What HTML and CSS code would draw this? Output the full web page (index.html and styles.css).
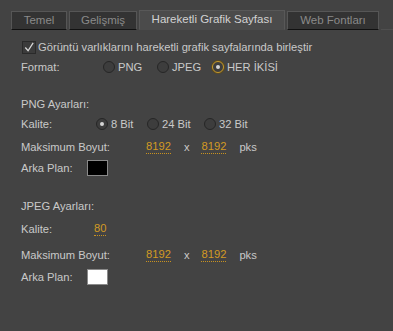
FILE: index.html
```html
<!DOCTYPE html>
<html lang="tr">
<head>
<meta charset="utf-8">
<link rel="stylesheet" href="styles.css">
</head>
<body>
<div class="tabs">
  <div class="tab tab-temel">Temel</div>
  <div class="tab tab-gel">Gelişmiş</div>
  <div class="tab active tab-har">Hareketli Grafik Sayfası</div>
  <div class="tab tab-web">Web Fontları</div>
  <div class="tab-rest"></div>
</div>
<div class="panel">
  <div class="row row-check">
    <span class="checkbox"><svg width="13" height="13" viewBox="0 0 13 13"><path d="M2.5 6.5 L5.5 10 L11 1.5" fill="none" stroke="#d8d8d8" stroke-width="1.4"/></svg></span>
    <span class="label">Görüntü varlıklarını hareketli grafik sayfalarında birleştir</span>
  </div>
  <div class="row row-format">
    <span class="label lw-format">Format:</span>
    <span class="radio"></span><span class="rtext w-png">PNG</span>
    <span class="radio"></span><span class="rtext w-jpeg">JPEG</span>
    <span class="radio on focus"></span><span class="rtext">HER İKİSİ</span>
  </div>

  <div class="row row-head1"><span class="label">PNG Ayarları:</span></div>
  <div class="row row-kal1">
    <span class="label lw-kal1">Kalite:</span>
    <span class="radio on"></span><span class="rtext w-8">8 Bit</span>
    <span class="radio"></span><span class="rtext w-24">24 Bit</span>
    <span class="radio"></span><span class="rtext">32 Bit</span>
  </div>
  <div class="row row-max1">
    <span class="label lw-max">Maksimum Boyut:</span>
    <span class="val w-val">8192</span><span class="label w-x">x</span>
    <span class="val w-val2">8192</span><span class="label">pks</span>
  </div>
  <div class="row row-bg1">
    <span class="label lw-bg">Arka Plan:</span>
    <span class="swatch black"></span>
  </div>

  <div class="row row-head2"><span class="label">JPEG Ayarları:</span></div>
  <div class="row row-kal2">
    <span class="label lw-kal2">Kalite:</span>
    <span class="val">80</span>
  </div>
  <div class="row row-max2">
    <span class="label lw-max">Maksimum Boyut:</span>
    <span class="val w-val">8192</span><span class="label w-x">x</span>
    <span class="val w-val2">8192</span><span class="label">pks</span>
  </div>
  <div class="row row-bg2">
    <span class="label lw-bg">Arka Plan:</span>
    <span class="swatch white"></span>
  </div>
</div>
</body>
</html>
```
FILE: styles.css
```css
html, body {
  margin: 0;
  padding: 0;
  background: #434343;
  width: 393px;
  height: 331px;
  overflow: hidden;
  font-family: "Liberation Sans", Arial, sans-serif;
  font-size: 11.2px;
  color: #c9c9c9;
}

.tabs {
  display: flex;
  align-items: flex-end;
  margin-top: 10px;
  padding-left: 11px;
  height: 20px;
}
.tab {
  box-sizing: border-box;
  height: 19px;
  line-height: 17px;
  background: #333333;
  border: 1px solid #565656;
  border-bottom: 1px solid #111;
  color: #8a8a8a;
  text-align: center;
  margin-right: 2px;
  font-size: 11.5px;
}
.tab.active {
  height: 20px;
  background: #4b4b4b;
  border-color: #585858;
  border-bottom: 1px solid #4b4b4b;
  color: #d2d2d2;
}
.tab-temel { width: 56px; }
.tab-gel { width: 68px; }
.tab-har { width: 146px; }
.tab-web { width: 92px; }
.tab-rest {
  flex: 1;
  height: 1px;
  background: #4f4f4f;
}

.panel {
  display: flex;
  flex-direction: column;
  padding-left: 21px;
}
.row {
  display: flex;
  align-items: center;
  height: 16px;
  white-space: nowrap;
}
.row-check { margin-top: 9px; margin-left: 1px; }
.row-format { margin-top: 4px; }
.row-head1 { margin-top: 21px; }
.row-kal1 { margin-top: 4px; }
.row-max1 { margin-top: 7px; }
.row-bg1 { margin-top: 5px; }
.row-head2 { margin-top: 22px; }
.row-kal2 { margin-top: 7px; }
.row-max2 { margin-top: 10px; }
.row-bg2 { margin-top: 6px; }

.checkbox {
  box-sizing: border-box;
  width: 14px;
  height: 13px;
  border: 1px solid #2a2a2a;
  background: #3b3b3b;
  margin-right: 2px;
  display: flex;
  align-items: center;
  justify-content: center;
}
.checkbox svg { display: block; }

.lw-format { width: 82px; }
.lw-kal1 { width: 75px; }
.lw-max { width: 125px; }
.lw-bg { width: 66px; }
.lw-kal2 { width: 73px; }

.radio {
  box-sizing: border-box;
  width: 12px;
  height: 12px;
  border-radius: 50%;
  border: 1px solid #262626;
  background: #3d3d3d;
  margin-right: 3px;
  position: relative;
}
.radio.on::after {
  content: "";
  position: absolute;
  left: 3px;
  top: 3px;
  width: 4px;
  height: 4px;
  border-radius: 50%;
  background: #d5d5d5;
}
.radio.focus {
  border: 1px solid #c79a2a;
  box-shadow: 0 0 0 1px #5a4a22;
}
.w-png { width: 39px; }
.w-jpeg { width: 40px; }
.w-8 { width: 36px; }
.w-24 { width: 42px; }

.val {
  color: #d29a23;
  border-bottom: 1px dotted #c9921f;
  line-height: 13px;
}
.w-val { margin-right: 13px; }
.w-x { margin-right: 12px; }
.w-val2 { margin-right: 13px; }

.swatch {
  box-sizing: border-box;
  width: 21px;
  height: 16px;
  border: 1px solid #8a8a8a;
}
.swatch.black { background: #000; }
.swatch.white { background: #fff; }
```
